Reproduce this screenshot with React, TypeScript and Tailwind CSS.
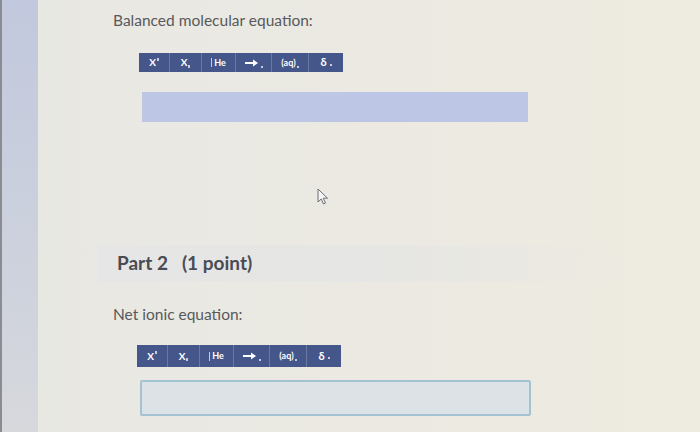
import React from "react";

const font = { fontFamily: "Lato, 'Open Sans', sans-serif" };

function Toolbar({ h }: { h: string }) {
  const cell = "flex items-center justify-center border-r border-[#6a78a3] last:border-r-0";
  return (
    <div className={`flex w-[204px] ${h} bg-[#45568a] text-white text-[10px] font-bold`}>
      <div className={`${cell} w-[31px]`}>
        <span>X</span>
        <span className="-mt-[7px] ml-[1px] h-[3px] w-[2px] bg-white/70" />
      </div>
      <div className={`${cell} w-[32px]`}>
        <span>X</span>
        <span className="mt-[7px] ml-[1px] h-[3px] w-[2px] bg-white/70" />
      </div>
      <div className={`${cell} w-[34px]`}>
        <span className="mr-[2px] h-[9px] w-[1px] bg-white/70" />
        <span className="text-[9px]">He</span>
      </div>
      <div className={`${cell} w-[36px]`}>
        <svg width="14" height="8" viewBox="0 0 14 8">
          <path d="M0 4h9" stroke="white" strokeWidth="2" />
          <path d="M8 0.5l5 3.5-5 3.5z" fill="white" />
        </svg>
        <span className="mt-[8px] ml-[2px] h-[2px] w-[2px] bg-white/70" />
      </div>
      <div className={`${cell} w-[37px]`}>
        <span className="text-[9px]">(aq)</span>
        <span className="mt-[8px] ml-[1px] h-[2px] w-[2px] bg-white/70" />
      </div>
      <div className={`${cell} w-[34px]`}>
        <span className="text-[11px]">δ</span>
        <span className="mt-[4px] ml-[3px] h-[2px] w-[2px] bg-white/70" />
      </div>
    </div>
  );
}

export default function App() {
  return (
    <div className="relative flex h-[432px] w-[700px] overflow-hidden bg-gradient-to-r from-[#e8e8e3] via-[#ebe9e2] to-[#eeebe0]" style={font}>
      <div className="flex h-full w-[38px] border-l-[2px] border-[#8a8c92]">
        <div className="h-full flex-1 bg-gradient-to-b from-[#c2c8dd] via-[#cbd0dd] to-[#d6d8dc]" />
      </div>

      <div className="flex flex-1 flex-col pl-[75px] pt-[10px]">
        <div className="text-[15.5px] leading-[20px] text-[#58595c]">Balanced molecular equation:</div>

        <div className="ml-[26px] mt-[23px]">
          <Toolbar h="h-[19px]" />
        </div>

        <div className="ml-[29px] mt-[20px] h-[30px] w-[386px] bg-[#bdc6e5]" />

        <div className="-ml-[15px] mt-[123px] flex h-[37px] w-[520px] items-center bg-gradient-to-r from-[#e5e6e5] via-[#e6e6e4] to-transparent pl-[19px]">
          <span className="text-[19px] font-bold text-[#4a4c55]">Part 2</span>
          <span className="ml-[14px] text-[19px] font-bold text-[#4a4c55]">(1 point)</span>
        </div>

        <div className="mt-[22px] text-[15.5px] leading-[20px] text-[#58595c]">Net ionic equation:</div>

        <div className="ml-[24px] mt-[21px]">
          <Toolbar h="h-[22px]" />
        </div>

        <div className="ml-[27px] mt-[13px] h-[36px] w-[391px] rounded-[2px] border-[2px] border-[#a3c3d3] bg-[#dde2e6]" />
      </div>

      <svg className="absolute left-[317px] top-[188px]" width="12" height="17" viewBox="0 0 12 17">
        <path d="M1 1v13l3.2-3 2.3 5 2-1-2.3-4.8H10.5z" fill="#f4f4f4" stroke="#6d6e72" strokeWidth="1" strokeLinejoin="round" />
      </svg>
    </div>
  );
}
